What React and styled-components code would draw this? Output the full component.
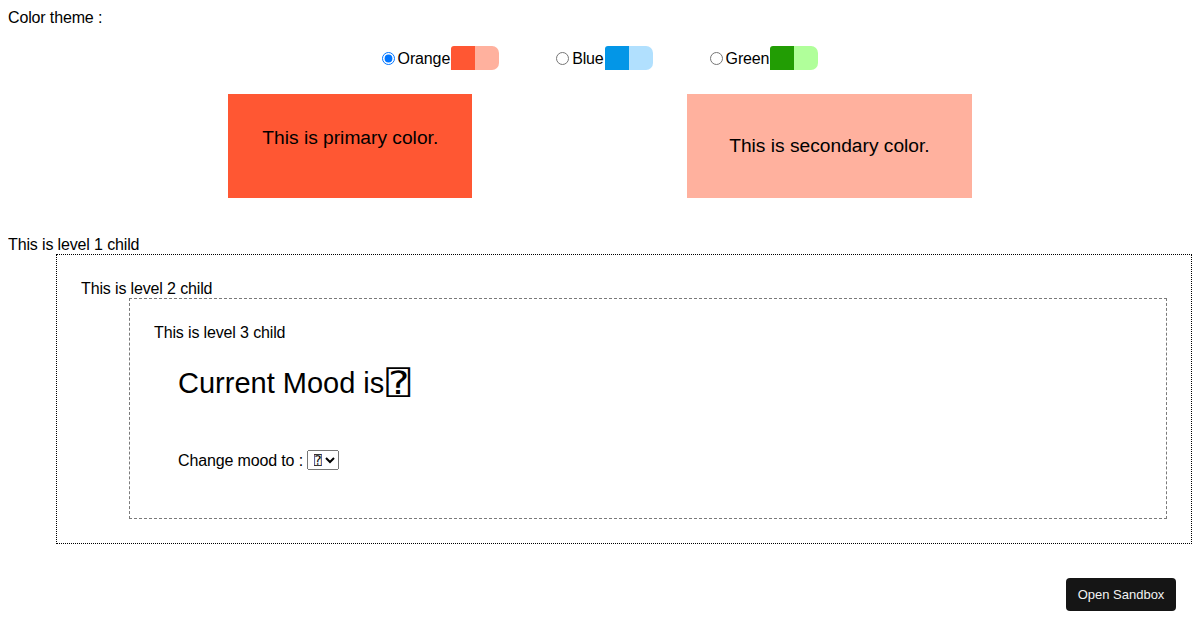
import React, { useState } from 'react';
import styled, { createGlobalStyle } from 'styled-components';

const GlobalStyle = createGlobalStyle`
  body {
    margin: 8px;
    font-family: 'Liberation Sans', Arial, sans-serif;
    font-size: 16px;
    line-height: 19px;
    letter-spacing: -0.14px;
    color: #000;
    background: #fff;
  }
`;

const themes = {
  orange: { label: 'Orange', primary: '#ff5733', secondary: '#ffb19e' },
  blue: { label: 'Blue', primary: '#0396e7', secondary: '#b1e0fe' },
  green: { label: 'Green', primary: '#229d04', secondary: '#b0ff9a' },
};

const ThemeRow = styled.div`
  display: flex;
  justify-content: center;
  align-items: center;
  gap: 52px;
  margin-top: 19px;
  margin-left: -5px;
  height: 24px;
`;

const ThemeOption = styled.label`
  display: flex;
  align-items: center;
  cursor: pointer;

  input {
    margin: 0 3px 0 5px;
    width: 13px;
    height: 13px;
  }
`;

const Swatch = styled.span`
  display: flex;
  width: 48px;
  height: 24px;
  margin-left: 1px;
  border-radius: 3px 7px 7px 0;
  overflow: hidden;

  span {
    flex: 1;
  }
`;

const ColorBoxes = styled.div`
  display: flex;
  justify-content: center;
  align-items: stretch;
  gap: 215px;
  margin-top: 24px;
`;

const ColorBox = styled.div`
  padding: ${({ $pad }) => $pad};
  background: ${({ $bg }) => $bg};
  font-size: 19.2px;
  line-height: normal;
  letter-spacing: normal;
`;

const LevelLabel = styled.div`
  margin-top: ${({ $top }) => $top || 0}px;
`;

const LevelBox = styled.div`
  margin-left: 48px;
  padding: 24px;
  border: 1px ${({ $line }) => $line};
`;

const MoodBlock = styled.div`
  padding: 25px 24px 24px;
`;

const MoodTitle = styled.div`
  display: flex;
  align-items: center;
  height: 33px;
  font-size: 29px;
  letter-spacing: normal;
  margin-bottom: 50px;
`;

const MoodGlyph = styled.span`
  display: inline-block;
  margin-left: 2px;
  font-family: 'DejaVu Sans Mono', monospace;
  font-size: 40px;
  line-height: 33px;
  transform: scaleY(0.8);
`;

const MoodPicker = styled.label`
  display: flex;
  align-items: center;
  gap: 4px;

  select {
    font-family: 'DejaVu Sans Mono', monospace;
    font-size: 13px;
    height: 20px;
    padding: 0 0 0 2px;
  }
`;

const SandboxButton = styled.button`
  position: fixed;
  right: 24px;
  bottom: 19px;
  width: 110px;
  height: 33px;
  border: 0;
  border-radius: 4px;
  background: #151515;
  color: #f2f2f2;
  font-family: 'Liberation Sans', Arial, sans-serif;
  font-size: 13px;
  cursor: pointer;
`;

const moods = ['⍰', '⍓', '⍌'];

const App = () => {
  const [theme, setTheme] = useState('orange');
  const [mood, setMood] = useState(moods[0]);
  const current = themes[theme];

  return (
    <>
      <GlobalStyle />
      <div>Color theme :</div>

      <ThemeRow>
        {Object.entries(themes).map(([key, t]) => (
          <ThemeOption key={key}>
            <input
              type="radio"
              name="theme"
              checked={theme === key}
              onChange={() => setTheme(key)}
            />
            {t.label}
            <Swatch>
              <span style={{ background: t.primary }} />
              <span style={{ background: t.secondary }} />
            </Swatch>
          </ThemeOption>
        ))}
      </ThemeRow>

      <ColorBoxes>
        <ColorBox $bg={current.primary} $pad="33px 34px">This is primary color.</ColorBox>
        <ColorBox $bg={current.secondary} $pad="41px 42px">This is secondary color.</ColorBox>
      </ColorBoxes>

      <LevelLabel $top={37}>This is level 1 child</LevelLabel>
      <LevelBox $line="dotted #000">
        <LevelLabel>This is level 2 child</LevelLabel>
        <LevelBox $line="dashed #7a7a7a">
          <LevelLabel>This is level 3 child</LevelLabel>
          <MoodBlock>
            <MoodTitle>
              Current Mood is<MoodGlyph>{mood}</MoodGlyph>
            </MoodTitle>
            <MoodPicker>
              Change mood to :
              <select value={mood} onChange={(e) => setMood(e.target.value)}>
                {moods.map((m) => (
                  <option key={m} value={m}>{m}</option>
                ))}
              </select>
            </MoodPicker>
          </MoodBlock>
        </LevelBox>
      </LevelBox>

      <SandboxButton>Open Sandbox</SandboxButton>
    </>
  );
};

export default App;
